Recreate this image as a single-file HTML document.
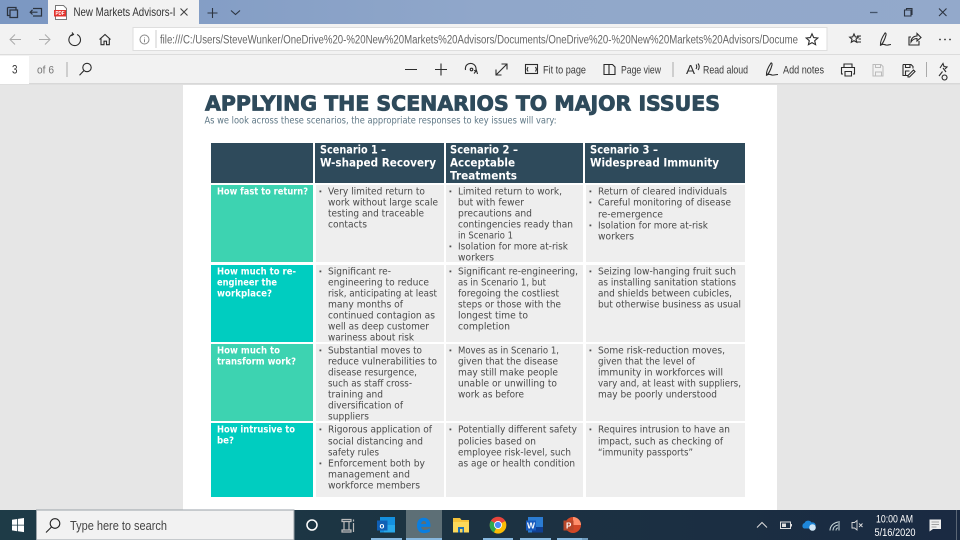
<!DOCTYPE html>
<html><head><meta charset="utf-8"><title>New Markets Advisors</title>
<style>
html,body{margin:0;padding:0;width:960px;height:540px;overflow:hidden;background:#e6e6e6}
svg{display:block;position:absolute;left:0;top:0;filter:blur(.3px)}
text{font-family:"Liberation Sans",sans-serif;}
.b text{font-family:"DejaVu Sans",sans-serif;font-size:9.500px;fill:#4a4a4a}
.l text{font-family:"DejaVu Sans",sans-serif;font-weight:bold;font-size:9.800px;fill:#fff}
.h text{font-family:"DejaVu Sans",sans-serif;font-weight:bold;font-size:11.500px;fill:#fff}
.ui text{font-size:11px;fill:#3c3c3c}
.ic{fill:none;stroke:#2c2c2c;stroke-width:1.100}
.g{fill:none;stroke:#999;stroke-width:1}
</style></head><body>
<svg width="960" height="540" viewBox="0 0 960 540">
<defs><linearGradient id="tb" x1="0" x2="1" y1="0" y2="0"><stop offset="0" stop-color="#7b97c2"/><stop offset=".5" stop-color="#90a7ca"/><stop offset="1" stop-color="#93a9cb"/></linearGradient>
<linearGradient id="task" x1="0" x2="1" y1="0" y2="0"><stop offset="0" stop-color="#1e3b47"/><stop offset=".45" stop-color="#1c3342"/><stop offset="1" stop-color="#1a2a42"/></linearGradient></defs>

<!-- title strip -->
<rect width="960" height="24" fill="url(#tb)"/>
<rect x="48" width="151" height="24" fill="#f2f2f2"/>
<rect y="24" width="960" height="30" fill="#f2f2f2"/>
<rect y="54" width="960" height="1" fill="#dcdcdc"/>
<rect y="55" width="960" height="29" fill="#f2f2f2"/>
<rect y="83" width="960" height="1.500" fill="#d8d8d8"/>
<rect x="133" y="27.500" width="694" height="23" fill="#fff" stroke="#dedede"/>
<rect x="0" y="56" width="29" height="28" fill="#fff"/>

<!-- tab strip icons -->
<g class="ic">
<path d="M7.500 7.500h8.500v2M7.500 7.500v8h2.500M10 10h7.500v7.500H10z" style="stroke:#2c3440;stroke-width:1.300"/>
<path d="M33 8.500h8.500v7.500H33M30 12.200h7.500M32.500 9.800 30.200 12.200l2.300 2.300" style="stroke:#2c3440;stroke-width:1.200"/>
<path d="M180.500 8.500l7 7m0-7-7 7" style="stroke:#444"/>
<path d="M207.500 13h10m-5-5v10" style="stroke:#2c3440"/>
<path d="M231 10.500l4.500 4 4.500-4" style="stroke:#2c3440"/>
<path d="M870 12.500h7.500" style="stroke:#44546a;stroke-width:1.300"/>
<path d="M904.500 10h6.500v6h-6.500zM906.500 10V8.500h5.500v6h-1" style="stroke:#2c3440"/>
<path d="M939 8.500l7.500 7.500m0-7.500-7.500 7.500" style="stroke:#2c3440"/>
</g>
<path d="M55.500 5.500h8l3 3v11h-11z" fill="#fff" stroke="#777"/>
<rect x="54" y="10" width="12" height="6.500" fill="#e2332d"/>
<text x="55.500" y="15" style="font-size:5px;font-weight:bold;fill:#fff" textLength="9" lengthAdjust="spacingAndGlyphs">PDF</text>
<text x="73.500" y="16" style="font-size:12px;fill:#333" textLength="102" lengthAdjust="spacingAndGlyphs">New Markets Advisors-I</text>

<!-- nav row -->
<path d="M10 39.500h11M15 34.500l-5 5 5 5" style="fill:none;stroke:#aaa"/><path d="M39 39.500h11M45 34.500l5 5-5 5" style="fill:none;stroke:#aaa"/>
<path d="M72.500 34.400a5.800 5.800 0 1 0 4.600 .1M72 32.500l1.500 2-2.200 1.300" class="ic"/>
<path d="M99.500 39.500l5.500-5 5.500 5M101 38.500v6.200h3v-3.500h2.500v3.500h2.800v-6.200" class="ic"/>
<circle cx="144.500" cy="39.500" r="4.500" fill="none" stroke="#888"/><path d="M144.500 37.500v.8m0 1v3" stroke="#888"/>
<rect x="155.500" y="30" width="1" height="18" fill="#ccc"/>
<text x="160" y="43.500" style="font-size:11.500px;fill:#666" textLength="638" lengthAdjust="spacingAndGlyphs">file:///C:/Users/SteveWunker/OneDrive%20-%20New%20Markets%20Advisors/Documents/OneDrive%20-%20New%20Markets%20Advisors/Docume</text>
<path d="M812 33.800l1.700 3.800 4.100.4-3.100 2.700.9 4-3.600-2.100-3.600 2.100.9-4-3.100-2.700 4.100-.4z" class="ic"/>
<path d="M854 34l1.300 2.900 3 .3-2.300 2 .7 3-2.700-1.600-2.700 1.600.7-3-2.300-2 3-.3zM857 36h4M858.500 39h2.500M857 42h4" class="ic"/>
<path d="M885 33c-2 3-5 8-4.500 12 2-.5 4.500-6 5.500-10 .3-1.500-.5-2.300-1-2zM880 45.500c3-2 4-1 6-.5 2 .5 3-.5 5-.5" class="ic"/>
<path d="M911 37h-2v8h10V41M911 42c0-4 3-6 6-6v-2.500l4 4-4 3.500v-2.500c-3 0-4.500 1-6 3.500z" class="ic"/>
<g fill="#333"><circle cx="940" cy="39.500" r=".9"/><circle cx="945" cy="39.500" r=".9"/><circle cx="950" cy="39.500" r=".9"/></g>

<!-- pdf toolbar -->
<g class="ui">
<text x="12" y="73.500" style="font-size:11.500px;fill:#333" textLength="5.500" lengthAdjust="spacingAndGlyphs">3</text>
<text x="37" y="73.500" style="font-size:11px;fill:#777" textLength="17" lengthAdjust="spacingAndGlyphs">of 6</text>
<text x="543" y="73.500" textLength="43" lengthAdjust="spacingAndGlyphs">Fit to page</text>
<text x="621" y="73.500" textLength="40" lengthAdjust="spacingAndGlyphs">Page view</text>
<text x="703" y="73.500" textLength="45" lengthAdjust="spacingAndGlyphs">Read aloud</text>
<text x="783" y="73.500" textLength="41" lengthAdjust="spacingAndGlyphs">Add notes</text>
</g>
<rect x="66.500" y="62" width="1" height="15" fill="#aaa"/>
<rect x="672.500" y="62" width="1" height="15" fill="#aaa"/>
<rect x="926" y="62" width="1" height="15" fill="#aaa"/>
<circle cx="87" cy="67.500" r="4.200" class="ic"/><path d="M84 70.500l-4.500 4.800" class="ic"/>
<path d="M405 69.500h12M435 69.500h12M441 63.500v12" class="ic"/>
<path d="M465.500 70c-.8-5 3-7 6-6.500 3 .5 5 3 4.500 7M476 71l-2-.5M474 73.500l2.500-3 1 3.500" class="ic"/><circle cx="471.500" cy="69.500" r="1.300" class="ic"/>
<path d="M496 75l11-11M501.500 64h5.500v5.500M496 69.500V75h5.500" class="ic"/>
<rect x="525.500" y="64.500" width="12" height="9" class="ic"/><path d="M528 67l-1 2.200 1 2.300M535.500 67l1 2.200-1 2.300" class="ic"/>
<path d="M604 64.500h5v10h-5zM609 64.500h3.500l2.500 2.500v7.500h-6" class="ic"/>
<text x="686" y="74" style="font-size:13px;fill:#333" textLength="9" lengthAdjust="spacingAndGlyphs">A</text>
<path d="M696 64.500c1 1 1 3 0 4.500M698 63.500c1.500 2 1.500 4.500 0 6.500" class="ic"/>
<path d="M771 63c-2 3-5 8-4.500 12 2-.5 4.500-6 5.500-10 .3-1.500-.5-2.300-1-2zM766 75.500c3-2 4-1 6-.5 2 .5 3-.5 6-.5" class="ic"/>
<path d="M844 68v-4h8v4M843 74h-1.500v-6.500h13V74H853M845 71.500h6.500v4.500H845z" class="ic"/>
<path d="M873 64.500h8l2 2v9.500h-10zM875.500 64.500v3h5v-3M875.500 76v-4h6v4" fill="none" stroke="#bbb"/>
<path d="M903 64.500h8l2 2v2M903 64.500v11h5M905.500 64.500v3h4.500v-3M905.500 75v-4h4M908 75.500l5.500-5.500 1.500 1.500-5.500 5.500h-1.500z" class="ic"/>
<path d="M940 68l3-4.500 1 3 3 .5-2 2M939 76l3.500-4.500M943 68l3 4M944.500 75a2.500 2.500 0 1 0 .1 0z" class="ic"/>

<!-- page -->
<rect x="183" y="85" width="594" height="425" fill="#fff"/>
<text x="205" y="110.700" style='font-family:"DejaVu Sans",sans-serif;font-weight:bold;font-size:20px;fill:#2e4a5b;stroke:#2e4a5b;stroke-width:.8' textLength="515" lengthAdjust="spacingAndGlyphs">APPLYING THE SCENARIOS TO MAJOR ISSUES</text>
<text x="204.500" y="123.500" style='font-family:"DejaVu Sans",sans-serif;font-size:9.500px;fill:#5f7886' textLength="352" lengthAdjust="spacingAndGlyphs">As we look across these scenarios, the appropriate responses to key issues will vary:</text>

<!-- table -->
<g fill="#2e4a5b"><rect x="211" y="143" width="102" height="40"/><rect x="315" y="143" width="129" height="40"/><rect x="446" y="143" width="137" height="40"/><rect x="585" y="143" width="160" height="40"/></g>
<rect x="211" y="185" width="102" height="77" fill="#3dd3b1"/>
<rect x="211" y="265" width="102" height="77" fill="#00cdc0"/>
<rect x="211" y="344" width="102" height="77" fill="#3dd3b1"/>
<rect x="211" y="423" width="102" height="74" fill="#00cdc0"/>
<g fill="#eeeeee">
<rect x="316" y="185" width="128" height="77"/><rect x="446" y="185" width="137" height="77"/><rect x="586" y="185" width="159" height="77"/>
<rect x="316" y="265" width="128" height="77"/><rect x="446" y="265" width="137" height="77"/><rect x="586" y="265" width="159" height="77"/>
<rect x="316" y="344" width="128" height="77"/><rect x="446" y="344" width="137" height="77"/><rect x="586" y="344" width="159" height="77"/>
<rect x="316" y="423" width="128" height="74"/><rect x="446" y="423" width="137" height="74"/><rect x="586" y="423" width="159" height="74"/>
</g>
<g class="h">
<text x="320" y="153.500" textLength="66" lengthAdjust="spacingAndGlyphs">Scenario 1 –</text>
<text x="320" y="166.500" textLength="116" lengthAdjust="spacingAndGlyphs">W-shaped Recovery</text>
<text x="450" y="153.500" textLength="68" lengthAdjust="spacingAndGlyphs">Scenario 2 –</text>
<text x="450" y="166.500" textLength="65" lengthAdjust="spacingAndGlyphs">Acceptable</text>
<text x="450" y="179.500" textLength="67" lengthAdjust="spacingAndGlyphs">Treatments</text>
<text x="590" y="153.500" textLength="68" lengthAdjust="spacingAndGlyphs">Scenario 3 –</text>
<text x="590" y="166.500" textLength="129" lengthAdjust="spacingAndGlyphs">Widespread Immunity</text>
</g>
<g class="l">
<text x="217" y="194.500" textLength="91" lengthAdjust="spacingAndGlyphs">How fast to return?</text>
<text x="217" y="274.500" textLength="79" lengthAdjust="spacingAndGlyphs">How much to re-</text>
<text x="217" y="285.500" textLength="60" lengthAdjust="spacingAndGlyphs">engineer the</text>
<text x="217" y="296.500" textLength="55" lengthAdjust="spacingAndGlyphs">workplace?</text>
<text x="217" y="353.500" textLength="63" lengthAdjust="spacingAndGlyphs">How much to</text>
<text x="217" y="364.500" textLength="79" lengthAdjust="spacingAndGlyphs">transform work?</text>
<text x="217" y="432.500" textLength="78" lengthAdjust="spacingAndGlyphs">How intrusive to</text>
<text x="217" y="443.500" textLength="17" lengthAdjust="spacingAndGlyphs">be?</text>
</g>
<g fill="#4e4e4e">
<rect x="319.500" y="190.500" width="1.800" height="1.800"/><rect x="319.500" y="270.500" width="1.800" height="1.800"/><rect x="319.500" y="349.500" width="1.800" height="1.800"/><rect x="319.500" y="428.500" width="1.800" height="1.800"/><rect x="319.500" y="462.500" width="1.800" height="1.800"/>
<rect x="449.500" y="190.500" width="1.800" height="1.800"/><rect x="449.500" y="245.500" width="1.800" height="1.800"/><rect x="449.500" y="270.500" width="1.800" height="1.800"/><rect x="449.500" y="349.500" width="1.800" height="1.800"/><rect x="449.500" y="428.500" width="1.800" height="1.800"/>
<rect x="589.500" y="190.500" width="1.800" height="1.800"/><rect x="589.500" y="201.500" width="1.800" height="1.800"/><rect x="589.500" y="224.500" width="1.800" height="1.800"/><rect x="589.500" y="270.500" width="1.800" height="1.800"/><rect x="589.500" y="349.500" width="1.800" height="1.800"/><rect x="589.500" y="428.500" width="1.800" height="1.800"/>
</g>
<g class="b">
<text x="328" y="194.500" textLength="97" lengthAdjust="spacingAndGlyphs">Very limited return to</text>
<text x="328" y="205.500" textLength="110" lengthAdjust="spacingAndGlyphs">work without large scale</text>
<text x="328" y="216.500" textLength="96" lengthAdjust="spacingAndGlyphs">testing and traceable</text>
<text x="328" y="227.500" textLength="39" lengthAdjust="spacingAndGlyphs">contacts</text>
<text x="328" y="274.500" textLength="63" lengthAdjust="spacingAndGlyphs">Significant re-</text>
<text x="328" y="285.500" textLength="101" lengthAdjust="spacingAndGlyphs">engineering to reduce</text>
<text x="328" y="296.500" textLength="109" lengthAdjust="spacingAndGlyphs">risk, anticipating at least</text>
<text x="328" y="307.500" textLength="75" lengthAdjust="spacingAndGlyphs">many months of</text>
<text x="328" y="318.500" textLength="107" lengthAdjust="spacingAndGlyphs">continued contagion as</text>
<text x="328" y="329.500" textLength="101" lengthAdjust="spacingAndGlyphs">well as deep customer</text>
<text x="328" y="340.500" textLength="86" lengthAdjust="spacingAndGlyphs">wariness about risk</text>
<text x="328" y="353.500" textLength="94" lengthAdjust="spacingAndGlyphs">Substantial moves to</text>
<text x="328" y="364.500" textLength="109" lengthAdjust="spacingAndGlyphs">reduce vulnerabilities to</text>
<text x="328" y="375.500" textLength="89" lengthAdjust="spacingAndGlyphs">disease resurgence,</text>
<text x="328" y="386.500" textLength="84" lengthAdjust="spacingAndGlyphs">such as staff cross-</text>
<text x="328" y="397.500" textLength="55" lengthAdjust="spacingAndGlyphs">training and</text>
<text x="328" y="408.500" textLength="75" lengthAdjust="spacingAndGlyphs">diversification of</text>
<text x="328" y="419.500" textLength="41" lengthAdjust="spacingAndGlyphs">suppliers</text>
<text x="328" y="432.500" textLength="104" lengthAdjust="spacingAndGlyphs">Rigorous application of</text>
<text x="328" y="444.500" textLength="95" lengthAdjust="spacingAndGlyphs">social distancing and</text>
<text x="328" y="455.500" textLength="51" lengthAdjust="spacingAndGlyphs">safety rules</text>
<text x="328" y="466.500" textLength="97" lengthAdjust="spacingAndGlyphs">Enforcement both by</text>
<text x="328" y="477.500" textLength="82" lengthAdjust="spacingAndGlyphs">management and</text>
<text x="328" y="488.500" textLength="92" lengthAdjust="spacingAndGlyphs">workforce members</text>

<text x="458" y="194.500" textLength="104" lengthAdjust="spacingAndGlyphs">Limited return to work,</text>
<text x="458" y="205.500" textLength="66" lengthAdjust="spacingAndGlyphs">but with fewer</text>
<text x="458" y="216.500" textLength="74" lengthAdjust="spacingAndGlyphs">precautions and</text>
<text x="458" y="227.500" textLength="115" lengthAdjust="spacingAndGlyphs">contingencies ready than</text>
<text x="458" y="238.500" textLength="55" lengthAdjust="spacingAndGlyphs">in Scenario 1</text>
<text x="458" y="249.500" textLength="110" lengthAdjust="spacingAndGlyphs">Isolation for more at-risk</text>
<text x="458" y="260.500" textLength="36" lengthAdjust="spacingAndGlyphs">workers</text>
<text x="458" y="274.500" textLength="120" lengthAdjust="spacingAndGlyphs">Significant re-engineering,</text>
<text x="458" y="285.500" textLength="88" lengthAdjust="spacingAndGlyphs">as in Scenario 1, but</text>
<text x="458" y="296.500" textLength="101" lengthAdjust="spacingAndGlyphs">foregoing the costliest</text>
<text x="458" y="307.500" textLength="103" lengthAdjust="spacingAndGlyphs">steps or those with the</text>
<text x="458" y="318.500" textLength="70" lengthAdjust="spacingAndGlyphs">longest time to</text>
<text x="458" y="329.500" textLength="52" lengthAdjust="spacingAndGlyphs">completion</text>
<text x="458" y="353.500" textLength="101" lengthAdjust="spacingAndGlyphs">Moves as in Scenario 1,</text>
<text x="458" y="364.500" textLength="100" lengthAdjust="spacingAndGlyphs">given that the disease</text>
<text x="458" y="375.500" textLength="100" lengthAdjust="spacingAndGlyphs">may still make people</text>
<text x="458" y="386.500" textLength="99" lengthAdjust="spacingAndGlyphs">unable or unwilling to</text>
<text x="458" y="397.500" textLength="66" lengthAdjust="spacingAndGlyphs">work as before</text>
<text x="458" y="432.500" textLength="119" lengthAdjust="spacingAndGlyphs">Potentially different safety</text>
<text x="458" y="444.500" textLength="78" lengthAdjust="spacingAndGlyphs">policies based on</text>
<text x="458" y="455.500" textLength="113" lengthAdjust="spacingAndGlyphs">employee risk-level, such</text>
<text x="458" y="466.500" textLength="117" lengthAdjust="spacingAndGlyphs">as age or health condition</text>

<text x="598" y="194.500" textLength="129" lengthAdjust="spacingAndGlyphs">Return of cleared individuals</text>
<text x="598" y="205.500" textLength="133" lengthAdjust="spacingAndGlyphs">Careful monitoring of disease</text>
<text x="598" y="217.500" textLength="65" lengthAdjust="spacingAndGlyphs">re-emergence</text>
<text x="598" y="228.500" textLength="110" lengthAdjust="spacingAndGlyphs">Isolation for more at-risk</text>
<text x="598" y="239.500" textLength="36" lengthAdjust="spacingAndGlyphs">workers</text>
<text x="598" y="274.500" textLength="138" lengthAdjust="spacingAndGlyphs">Seizing low-hanging fruit such</text>
<text x="598" y="285.500" textLength="138" lengthAdjust="spacingAndGlyphs">as installing sanitation stations</text>
<text x="598" y="296.500" textLength="134" lengthAdjust="spacingAndGlyphs">and shields between cubicles,</text>
<text x="598" y="307.500" textLength="143" lengthAdjust="spacingAndGlyphs">but otherwise business as usual</text>
<text x="598" y="353.500" textLength="127" lengthAdjust="spacingAndGlyphs">Some risk-reduction moves,</text>
<text x="598" y="364.500" textLength="97" lengthAdjust="spacingAndGlyphs">given that the level of</text>
<text x="598" y="375.500" textLength="125" lengthAdjust="spacingAndGlyphs">immunity in workforces will</text>
<text x="598" y="386.500" textLength="143" lengthAdjust="spacingAndGlyphs">vary and, at least with suppliers,</text>
<text x="598" y="397.500" textLength="119" lengthAdjust="spacingAndGlyphs">may be poorly understood</text>
<text x="598" y="432.500" textLength="132" lengthAdjust="spacingAndGlyphs">Requires intrusion to have an</text>
<text x="598" y="444.500" textLength="125" lengthAdjust="spacingAndGlyphs">impact, such as checking of</text>
<text x="598" y="455.500" textLength="95" lengthAdjust="spacingAndGlyphs">“immunity passports”</text>
</g>

<!-- taskbar -->
<rect y="510" width="960" height="30" fill="url(#task)"/>
<g fill="#fff"><path d="M12 519.800l5.200-.8v5.700H12zM18 518.900l6-.9v6.700h-6zM12 525.500h5.200v5.700l-5.200-.8zM18 525.500h6v6.600l-6-.9z"/></g>
<rect x="36.500" y="510" width="257.500" height="30" fill="#f2f2f2" stroke="#9aa2a8"/>
<circle cx="55" cy="523.500" r="4.800" fill="none" stroke="#222" stroke-width="1.100"/>
<path d="M51.500 527l-5.500 5.500" stroke="#222" stroke-width="1.100"/>
<text x="70" y="530" style="font-size:13px;fill:#444" textLength="97" lengthAdjust="spacingAndGlyphs">Type here to search</text>
<circle cx="312" cy="525" r="5" fill="none" stroke="#fff" stroke-width="1.500"/>
<path d="M342 519.500h9v2h-9zM342 530h9v2h-9zM344 522v8h5v-8M353.500 519.500v2M353.500 523v9" fill="none" stroke="#bbb" stroke-width="1.200"/>
<!-- outlook -->
<rect x="380" y="517" width="15" height="15.500" fill="#1490df"/><rect x="384" y="525" width="11" height="7.500" fill="#28a8ea"/>
<rect x="377" y="520.500" width="10.500" height="10" fill="#0f5fb5"/><text x="379.500" y="528.500" style="font-size:8px;font-weight:bold;fill:#fff">o</text>
<rect x="371" y="538" width="31" height="2" fill="#87b8df"/>
<!-- edge -->
<rect x="406" y="510" width="36" height="30" fill="#5d6f76"/>
<text x="416" y="532.500" style='font-family:"DejaVu Sans",sans-serif;font-size:27px;font-weight:bold;fill:#0a7ee0' textLength="15.500" lengthAdjust="spacingAndGlyphs">e</text>
<rect x="406" y="538" width="36" height="2" fill="#87b8df"/>
<!-- explorer -->
<path d="M453 518h7l1.500 2H469v12.500h-16z" fill="#f5c33b"/><rect x="453" y="522" width="16" height="10.500" fill="#fbd85a"/><rect x="458" y="527" width="6" height="5.500" fill="#1b6fb5"/><rect x="460" y="529" width="2.500" height="3.500" fill="#fbd85a"/>
<!-- chrome -->
<circle cx="498" cy="525" r="8.300" fill="#e8453c"/><path d="M498 525l-7.100-4.200A8.300 8.300 0 0 0 494 532.500z" fill="#2fa94e"/><path d="M498 525l-4 7.500A8.300 8.300 0 0 0 506.300 525a8 8 0 0 0-1-4z" fill="#fbbc05"/><circle cx="498" cy="525" r="4" fill="#fff"/><circle cx="498" cy="525" r="3.100" fill="#4a8af4"/>
<rect x="483" y="538" width="30" height="2" fill="#87b8df"/>
<!-- word -->
<rect x="528" y="517" width="15" height="15.500" fill="#2b7cd3"/><rect x="532" y="527" width="11" height="5.500" fill="#103f91"/><rect x="526" y="520.500" width="10" height="10" fill="#185abd"/><text x="527" y="528.500" style="font-size:8px;font-weight:bold;fill:#fff" textLength="8" lengthAdjust="spacingAndGlyphs">W</text>
<rect x="520" y="538" width="31" height="2" fill="#87b8df"/>
<!-- ppt -->
<circle cx="573" cy="525" r="8" fill="#d24726"/><path d="M573 517a8 8 0 0 1 8 8h-8z" fill="#ff8f6b"/><rect x="563.500" y="520.500" width="10" height="10" fill="#b7472a"/><text x="566" y="528.500" style="font-size:8px;font-weight:bold;fill:#fff">P</text>
<rect x="557" y="538" width="31" height="2" fill="#87b8df"/><rect x="582" y="538" width="6" height="2" fill="#6f9cbf"/>
<!-- tray -->
<path d="M757 527.500l5-5 5 5" fill="none" stroke="#ddd" stroke-width="1"/>
<rect x="780.500" y="522" width="10" height="6.500" fill="none" stroke="#ddd"/><rect x="782" y="523.500" width="4" height="3.500" fill="#ddd"/><rect x="791" y="524" width="1" height="2.500" fill="#ddd"/>
<path d="M804 528.500a3 3 0 0 1 .5-5.500 4 4 0 0 1 7-.5 3 3 0 0 1 2 6z" fill="#1e86d8"/><circle cx="812.500" cy="527.500" r="3.300" fill="#cfe6f7"/>
<path d="M830 530.500c0-4 3-7.500 8-8.500M833 530.500c0-3 2-5 5-5.500M836 530.500c0-1.500 1-2.500 2-2.500M839 521v9.500" fill="none" stroke="#cdd" stroke-width="1"/>
<path d="M852 522.500h2.500l2.500-2v9.500l-2.500-2H852zM859 523.500l3.500 3.500m0-3.500-3.500 3.500" fill="none" stroke="#ddd" stroke-width=".9"/>
<text x="876" y="522.500" style="font-size:11px;fill:#fff" textLength="37" lengthAdjust="spacingAndGlyphs">10:00 AM</text>
<text x="874.500" y="536" style="font-size:11px;fill:#fff" textLength="41" lengthAdjust="spacingAndGlyphs">5/16/2020</text>
<path d="M929.500 519.500h11.500v9.500h-8l-3.500 2.500z" fill="#eee"/><path d="M931.500 522h7.500M931.500 524.500h7.500M931.500 527h5" stroke="#888" stroke-width=".7"/>
<rect x="956" y="510" width="1" height="30" fill="#5a6675"/>
</svg>
</body></html>
